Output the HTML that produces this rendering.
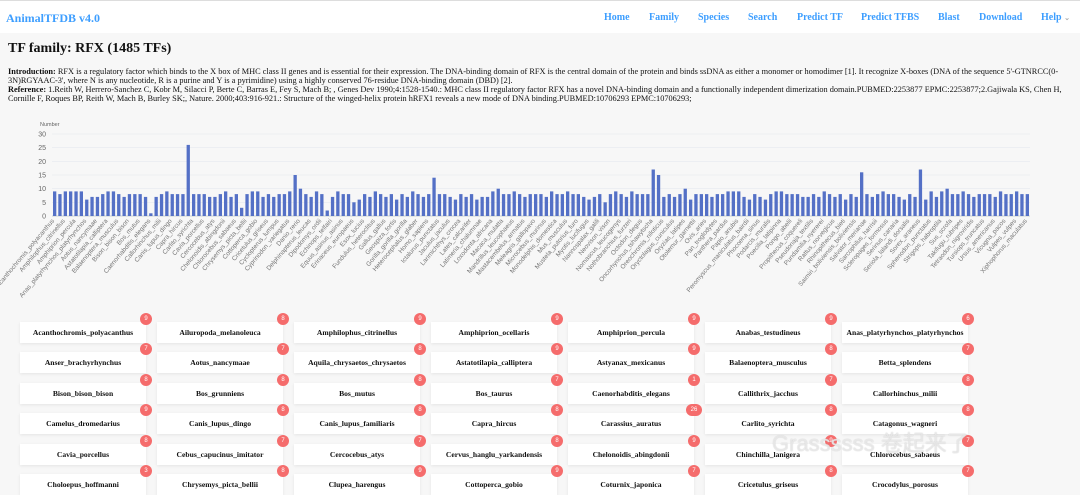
<!DOCTYPE html>
<html><head><meta charset="utf-8">
<style>
*{margin:0;padding:0;box-sizing:border-box}
body{width:1080px;height:491px;overflow:hidden;background:#f7f7f7;font-family:"Liberation Serif",serif;position:relative;color:#111}
.top{position:absolute;left:0;top:0;width:1080px;height:33px;background:#fff;border-top:1px solid #ddd}
.logo{position:absolute;left:6px;top:10px;font-weight:bold;font-size:12px;color:#3d9eff}
.nav{position:absolute;top:11px;font-weight:bold;font-size:10px;color:#3d9eff}
h1{position:absolute;left:8px;top:41px;font-size:14px;font-weight:bold}
.intro{position:absolute;left:8px;top:67px;width:1068px;font-size:8.3px;line-height:9px}
.card{position:absolute;width:126px;height:21px;background:#fff;box-shadow:0 1px 3px rgba(0,0,0,.08);font-weight:bold;font-size:7.6px;text-align:center;padding-top:6px;line-height:9px;overflow:hidden}
.b{position:absolute;width:12px;height:12px;border-radius:6px;background:#f56c6c;color:#fff;font-size:6px;text-align:center;line-height:12px;font-family:"Liberation Sans",sans-serif}
svg text{font-family:"Liberation Sans",sans-serif}
</style></head><body>
<div class="top">
<div class="logo">AnimalTFDB v4.0</div>
<div class="nav" style="left:604px">Home</div>
<div class="nav" style="left:649px">Family</div>
<div class="nav" style="left:698px">Species</div>
<div class="nav" style="left:748px">Search</div>
<div class="nav" style="left:797px">Predict TF</div>
<div class="nav" style="left:861px">Predict TFBS</div>
<div class="nav" style="left:938px">Blast</div>
<div class="nav" style="left:979px">Download</div>
<div class="nav" style="left:1041px">Help <span style="font-size:7px;color:#aaa">⌄</span></div>
</div>
<h1>TF family: RFX (1485 TFs)</h1>
<div class="intro"><b>Introduction:</b> RFX is a regulatory factor which binds to the X box of MHC class II genes and is essential for their expression. The DNA-binding domain of RFX is the central domain of the protein and binds ssDNA as either a monomer or homodimer [1]. It recognize X-boxes (DNA of the sequence 5'-GTNRCC(0-3N)RGYAAC-3', where N is any nucleotide, R is a purine and Y is a pyrimidine) using a highly conserved 76-residue DNA-binding domain (DBD) [2].<br><b>Reference:</b> 1.Reith W, Herrero-Sanchez C, Kobr M, Silacci P, Berte C, Barras E, Fey S, Mach B; , Genes Dev 1990;4:1528-1540.: MHC class II regulatory factor RFX has a novel DNA-binding domain and a functionally independent dimerization domain.PUBMED:2253877 EPMC:2253877;2.Gajiwala KS, Chen H, Cornille F, Roques BP, Reith W, Mach B, Burley SK;, Nature. 2000;403:916-921.: Structure of the winged-helix protein hRFX1 reveals a new mode of DNA binding.PUBMED:10706293 EPMC:10706293;</div>
<svg id="ch" width="1080" height="310" style="position:absolute;left:0;top:0"></svg>
<div id="cards"></div>
<div style="position:absolute;left:772px;top:426px;font-size:22px;color:rgba(255,255,255,.6);font-family:'Liberation Sans','Noto Sans CJK SC',sans-serif;text-shadow:0 0 1px #bbb">Grassssss 卷起来了</div>
<script>
var s='';
var y0=216,k=82/30,x0=52,x1=1030;
for(var i=0;i<=6;i++){var y=y0-i*5*k;s+='<line x1="'+x0+'" x2="'+x1+'" y1="'+y+'" y2="'+y+'" stroke="'+(i?'#e6e8ee':'#9aa')+'" stroke-width="0.6"/>';s+='<text x="46" y="'+(y+2.5)+'" font-size="7" fill="#666" text-anchor="end">'+(i*5)+'</text>';}
s+='<text x="40" y="126" font-size="5.5" fill="#666">Number</text>';
var h=[9,8,9,9,9,9,6,7,7,8,9,9,8,7,8,8,8,7,1,7,8,9,8,8,8,26,8,8,8,7,7,8,9,7,8,3,8,9,9,7,8,7,8,8,9,15,10,8,7,9,8,2,7,9,8,8,5,6];
var seq=[8,7,9,8,7,8,6,8,7,9,8,7,8,9,8,8,7,6,8,7,8,6,7,7,9,10,8,8,9,8,7,8,8,8,7,9,8,8,9,8,8,7,6,7,8,5,8,9,8,7,9,8,8,8,8,7,7,8,7,8,10,6,8,8,8,7,8,8,9,9,9,7,6,8,7,6,8,9,9,8,8,8,7,7];
var j=0;while(h.length<183){h.push(seq[j%seq.length]);j++;}
h[71]=14;h[112]=17;h[113]=15;h[151]=16;h[162]=17;h[164]=9;
var names=["Acanthochromis_polyacanthus","Amphilophus_citrinellus","Amphiprion_percula","Anas_platyrhynchos_platyrhynchos","Aotus_nancymaae","Astatotilapia_calliptera","Balaenoptera_musculus","Bison_bison_bison","Bos_mutus","Caenorhabditis_elegans","Callorhinchus_milii","Canis_lupus_dingo","Capra_hircus","Carlito_syrichta","Cavia_porcellus","Cercocebus_atys","Chelonoidis_abingdonii","Chlorocebus_sabaeus","Chrysemys_picta_bellii","Cottoperca_gobio","Cricetulus_griseus","Cyclopterus_lumpus","Cyprinodon_variegatus","Danio_rerio","Delphinapterus_leucas","Dipodomys_ordii","Echinops_telfairi","Equus_asinus_asinus","Erinaceus_europaeus","Esox_lucius","Fundulus_heteroclitus","Gallus_gallus","Geospiza_fortis","Gorilla_gorilla_gorilla","Heterocephalus_glaber","Homo_sapiens","Ictalurus_punctatus","Jaculus_jaculus","Larimichthys_crocea","Lates_calcarifer","Latimeria_chalumnae","Loxodonta_africana","Macaca_mulatta","Mandrillus_leucophaeus","Mastacembelus_armatus","Meleagris_gallopavo","Microcebus_murinus","Monodelphis_domestica","Mus_musculus","Mustela_putorius_furo","Myotis_lucifugus","Nannospalax_galili","Neovison_vison","Nomascus_leucogenys","Nothobranchius_furzeri","Octodon_degus","Oncorhynchus_tshawytscha","Oreochromis_niloticus","Oryctolagus_cuniculus","Oryzias_latipes","Otolemur_garnettii","Ovis_aries","Pan_troglodytes","Panthera_pardus","Papio_anubis","Peromyscus_maniculatus_bairdii","Phocoena_sinus","Podarcis_muralis","Poecilia_latipinna","Pongo_abelii","Propithecus_coquereli","Pseudonaja_textilis","Pundamilia_nyererei","Rattus_norvegicus","Rhinopithecus_bieti","Saimiri_boliviensis_boliviensis","Salvator_merianae","Sarcophilus_harrisii","Scleropages_formosus","Serinus_canaria","Seriola_lalandi_dorsalis","Sorex_araneus","Sphenodon_punctatus","Strigops_habroptila","Sus_scrofa","Takifugu_rubripes","Tetraodon_nigroviridis","Tursiops_truncatus","Ursus_americanus","Vicugna_pacos","Vulpes_vulpes","Xiphophorus_maculatus"];
var w=(x1-x0)/183;
for(var i=0;i<183;i++){var x=x0+i*w+1;var hh=h[i]*k;s+='<rect x="'+x.toFixed(1)+'" y="'+(y0-hh).toFixed(1)+'" width="3.3" height="'+hh.toFixed(1)+'" fill="#5470c6"/>';}
for(var i=0;i<92;i++){var cx=x0+(i*2)*w+2.6;var nm=names[i]||"";s+='<text transform="translate('+cx.toFixed(1)+',221) rotate(-50)" font-size="6.4" fill="#777" text-anchor="end">'+nm+'</text>';}
document.getElementById('ch').innerHTML=s;
var cards=[["Acanthochromis_polyacanthus",9],["Ailuropoda_melanoleuca",8],["Amphilophus_citrinellus",9],["Amphiprion_ocellaris",9],["Amphiprion_percula",9],["Anabas_testudineus",9],["Anas_platyrhynchos_platyrhynchos",6],
["Anser_brachyrhynchus",7],["Aotus_nancymaae",7],["Aquila_chrysaetos_chrysaetos",8],["Astatotilapia_calliptera",9],["Astyanax_mexicanus",9],["Balaenoptera_musculus",8],["Betta_splendens",7],
["Bison_bison_bison",8],["Bos_grunniens",8],["Bos_mutus",8],["Bos_taurus",7],["Caenorhabditis_elegans",1],["Callithrix_jacchus",7],["Callorhinchus_milii",8],
["Camelus_dromedarius",9],["Canis_lupus_dingo",8],["Canis_lupus_familiaris",8],["Capra_hircus",8],["Carassius_auratus",26],["Carlito_syrichta",8],["Catagonus_wagneri",8],
["Cavia_porcellus",8],["Cebus_capucinus_imitator",7],["Cercocebus_atys",7],["Cervus_hanglu_yarkandensis",8],["Chelonoidis_abingdonii",9],["Chinchilla_lanigera",9],["Chlorocebus_sabaeus",7],
["Choloepus_hoffmanni",3],["Chrysemys_picta_bellii",8],["Clupea_harengus",9],["Cottoperca_gobio",9],["Coturnix_japonica",7],["Cricetulus_griseus",8],["Crocodylus_porosus",7]];
var c='';
for(var i=0;i<cards.length;i++){var col=i%7,row=Math.floor(i/7);var x=20+col*137,y=322+row*30.4;
c+='<div class="card" style="left:'+x+'px;top:'+y+'px">'+cards[i][0]+'</div>';
var bw=cards[i][1]>9?16:12;c+='<div class="b" style="left:'+(x+126-bw/2)+'px;top:'+(y-9)+'px;width:'+bw+'px">'+cards[i][1]+'</div>';}
document.getElementById('cards').innerHTML=c;
</script>
</body></html>
